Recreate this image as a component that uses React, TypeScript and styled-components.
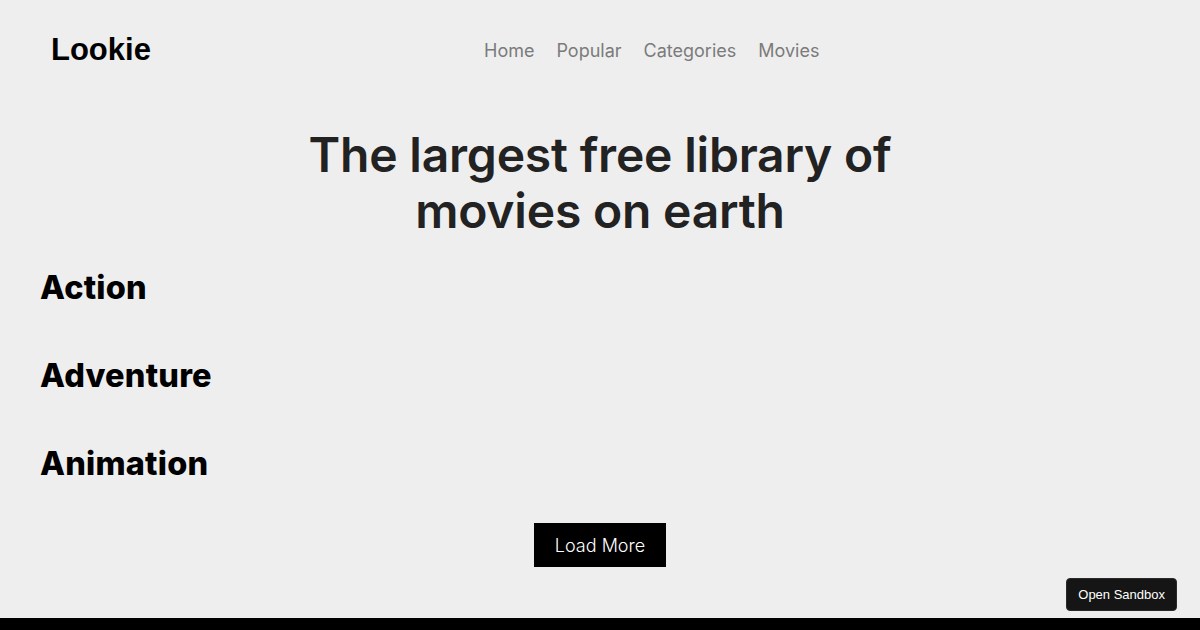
import styled, { createGlobalStyle } from "styled-components"

const GlobalStyle = createGlobalStyle`
    * {
        box-sizing: border-box;
    }

    body {
        margin: 0;
        background-color: #eeeeee;
        font-family: Inter, "Noto Sans", sans-serif;
        overflow: hidden;
    }
`

const Page = styled.div`
    display: flex;
    flex-direction: column;
`

const Header = styled.header`
    height: 100px;
    padding: 0 51px;

    display: flex;
    align-items: center;
`

const Logo = styled.h1`
    width: 433px;
    margin: 0;

    font-family: "Liberation Sans", Arial, sans-serif;
    font-weight: 700;
    font-size: 31px;
    color: #000000;
`

const Nav = styled.nav`
    display: flex;
    align-items: center;
    gap: 22px;
`

const NavLink = styled.a`
    font-size: 18px;
    font-weight: 400;
    color: #7b7b7b;
    text-decoration: none;
    cursor: pointer;
`

const Title = styled.h2`
    margin: 27px 0 0;

    text-align: center;
    font-size: 48px;
    font-weight: 600;
    line-height: 56px;
    letter-spacing: -0.2px;
    color: #222222;
`

const Categories = styled.section`
    margin-top: 29px;
    padding: 0 40px;

    display: flex;
    flex-direction: column;
    gap: 48px;
`

const CategoryTitle = styled.h3`
    margin: 0;

    font-size: 32.5px;
    font-weight: 800;
    line-height: 40px;
    letter-spacing: 0.2px;
    color: #000000;
`

const LoadRow = styled.div`
    margin-top: 39px;

    display: flex;
    justify-content: center;
`

const LoadButton = styled.button`
    height: 44px;
    padding: 0 21px;

    border: none;
    background-color: #000000;
    color: #ffffff;

    font-family: inherit;
    font-size: 18px;
    font-weight: 300;
    cursor: pointer;
`

const Footer = styled.footer`
    margin-top: 51px;
    height: 12px;

    background-color: #000000;
`

const SandboxButton = styled.button`
    position: fixed;
    right: 23px;
    bottom: 19px;

    height: 33px;
    padding: 0 11px;

    border: 1px solid #2a2a2a;
    border-radius: 4px;
    background-color: #151515;
    color: #ffffff;

    font-family: "Liberation Sans", Arial, sans-serif;
    font-size: 13px;
    cursor: pointer;
`

const links = ["Home", "Popular", "Categories", "Movies"]
const genres = ["Action", "Adventure", "Animation"]

export default function App() {
    return (
        <Page>
            <GlobalStyle />
            <Header>
                <Logo>Lookie</Logo>
                <Nav>
                    {links.map((link) => (
                        <NavLink key={link}>{link}</NavLink>
                    ))}
                </Nav>
            </Header>
            <Title>
                The largest free library of
                <br />
                movies on earth
            </Title>
            <Categories>
                {genres.map((genre) => (
                    <CategoryTitle key={genre}>{genre}</CategoryTitle>
                ))}
            </Categories>
            <LoadRow>
                <LoadButton>Load More</LoadButton>
            </LoadRow>
            <Footer />
            <SandboxButton>Open Sandbox</SandboxButton>
        </Page>
    )
}
